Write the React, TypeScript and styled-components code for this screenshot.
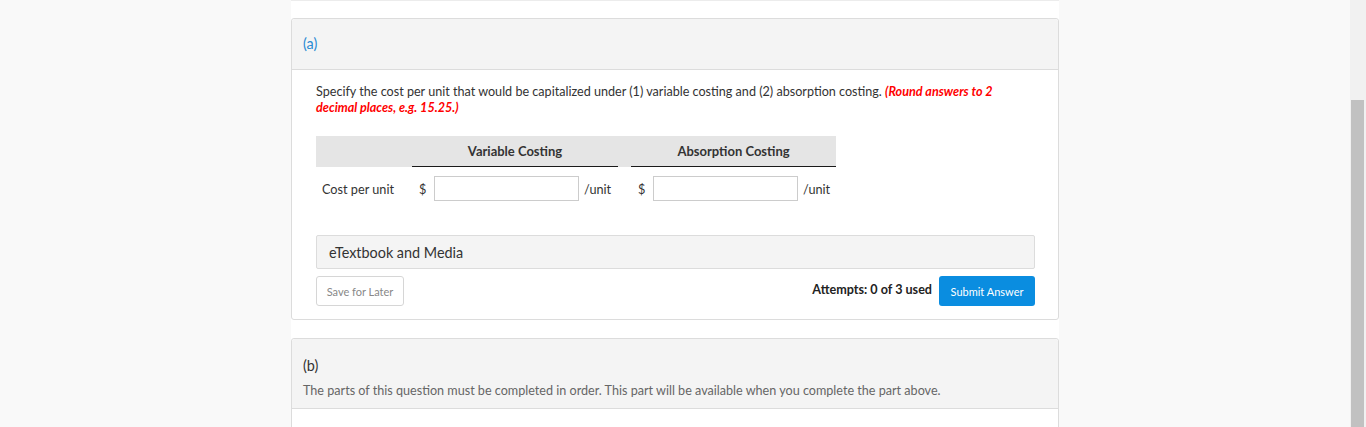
import React from "react";
import styled, { createGlobalStyle } from "styled-components";

const Global = createGlobalStyle`
  html, body { margin: 0; padding: 0; }
  body {
    background: #f9f9f9;
    font-family: Lato, "Open Sans", Arial, sans-serif;
    color: #333;
    overflow: hidden;
  }
  * { box-sizing: border-box; }
`;

const Screen = styled.div`
  display: flex;
  width: 1366px;
  height: 427px;
  overflow: hidden;
`;

const Main = styled.div`
  flex: 1;
  display: flex;
  justify-content: center;
`;

const ScrollTrack = styled.div`
  width: 16px;
  background: #f1f1f1;
  padding: 100px 2px 0 1px;
  display: flex;
`;

const ScrollThumb = styled.div`
  flex: 1;
  background: #c1c1c1;
`;

const Column = styled.div`
  width: 768px;
  background: #fff;
  border-top: 1px solid #ececec;
  padding-top: 17px;
  display: flex;
  flex-direction: column;
  gap: 18px;
`;

const Panel = styled.section`
  border: 1px solid #dcdcdc;
  border-radius: 3px;
  background: #fff;
`;

const PanelHeader = styled.div<{ $tall?: boolean }>`
  background: #f4f4f4;
  border-bottom: 1px solid #dcdcdc;
  border-radius: 3px 3px 0 0;
  padding: ${(p) => (p.$tall ? "18px 11px 10px" : "16px 11px 0")};
  height: ${(p) => (p.$tall ? "70px" : "51px")};
`;

const PartLabel = styled.div<{ $active?: boolean }>`
  font-size: 14.4px;
  line-height: 18px;
  color: ${(p) => (p.$active ? "#2b8bd3" : "#333")};
`;

const LockedNote = styled.div`
  margin-top: 8px;
  font-size: 12.6px;
  line-height: 16px;
  color: #666;
`;

const PanelBody = styled.div<{ $empty?: boolean }>`
  padding: ${(p) => (p.$empty ? "0" : "14px 23px 13px 24px")};
  height: ${(p) => (p.$empty ? "30px" : "auto")};
`;

const Prompt = styled.p`
  margin: 0;
  font-size: 12.6px;
  line-height: 16px;
  color: #333;
`;

const Hint = styled.em`
  color: #f00;
  font-weight: 700;
`;

const CostTable = styled.div`
  margin-top: 20px;
  display: grid;
  grid-template-columns: 96px 206px 13px 205px;
  width: 520px;
`;

const HeadCell = styled.div<{ $underline?: boolean }>`
  background: #e5e5e5;
  height: 31px;
  font-size: 13px;
  font-weight: 700;
  color: #333;
  display: flex;
  align-items: center;
  justify-content: center;
  padding-bottom: 1px;
  border-bottom: 1px solid ${(p) => (p.$underline ? "#1a1a1a" : "#e5e5e5")};
`;

const RowLabel = styled.div`
  font-size: 12.7px;
  color: #333;
  padding-left: 6px;
  height: 43px;
  display: flex;
  align-items: center;
`;

const InputCell = styled.div`
  display: flex;
  align-items: center;
  height: 43px;
  font-size: 12.7px;
  color: #333;
  padding-left: 7px;
`;

const Dollar = styled.span`
  width: 15px;
`;

const AnswerInput = styled.input`
  width: 145px;
  height: 25px;
  border: 1px solid #ccc;
  border-radius: 0;
  background: #fff;
  margin: 0 5px 0 0;
  padding: 0 6px;
  font: inherit;
`;

const Unit = styled.span``;

const MediaBar = styled.div`
  margin-top: 25px;
  height: 34px;
  background: #f4f4f4;
  border: 1px solid #dcdcdc;
  border-radius: 2px;
  padding: 0 12px;
  display: flex;
  align-items: center;
  font-size: 14.4px;
  color: #333;
`;

const ActionRow = styled.div`
  margin-top: 7px;
  display: flex;
  align-items: center;
`;

const SaveButton = styled.button`
  height: 30px;
  width: 88px;
  border: 1px solid #d6d6d6;
  border-radius: 3px;
  background: #fff;
  color: #888;
  font-family: inherit;
  font-size: 11px;
  padding: 0;
`;

const Attempts = styled.span`
  margin-left: auto;
  margin-right: 7px;
  font-size: 12.6px;
  font-weight: 700;
  color: #222;
  padding-bottom: 4px;
`;

const SubmitButton = styled.button`
  height: 30px;
  width: 96px;
  border: none;
  border-radius: 3px;
  background: #0a8de0;
  color: #fff;
  font-family: inherit;
  font-size: 11px;
  padding: 0;
`;

export default function App() {
  return (
    <>
      <Global />
      <Screen>
        <Main>
          <Column>
            <Panel>
              <PanelHeader>
                <PartLabel $active>(a)</PartLabel>
              </PanelHeader>
              <PanelBody>
                <Prompt>
                  Specify the cost per unit that would be capitalized under (1) variable costing and (2) absorption costing.{" "}
                  <Hint>(Round answers to 2 decimal places, e.g. 15.25.)</Hint>
                </Prompt>
                <CostTable>
                  <HeadCell />
                  <HeadCell $underline>Variable Costing</HeadCell>
                  <HeadCell />
                  <HeadCell $underline>Absorption Costing</HeadCell>
                  <RowLabel>Cost per unit</RowLabel>
                  <InputCell>
                    <Dollar>$</Dollar>
                    <AnswerInput type="text" />
                    <Unit>/unit</Unit>
                  </InputCell>
                  <div />
                  <InputCell>
                    <Dollar>$</Dollar>
                    <AnswerInput type="text" />
                    <Unit>/unit</Unit>
                  </InputCell>
                </CostTable>
                <MediaBar>eTextbook and Media</MediaBar>
                <ActionRow>
                  <SaveButton>Save for Later</SaveButton>
                  <Attempts>Attempts: 0 of 3 used</Attempts>
                  <SubmitButton>Submit Answer</SubmitButton>
                </ActionRow>
              </PanelBody>
            </Panel>
            <Panel>
              <PanelHeader $tall>
                <PartLabel>(b)</PartLabel>
                <LockedNote>
                  The parts of this question must be completed in order. This part will be available when you complete the part above.
                </LockedNote>
              </PanelHeader>
              <PanelBody $empty />
            </Panel>
          </Column>
        </Main>
        <ScrollTrack>
          <ScrollThumb />
        </ScrollTrack>
      </Screen>
    </>
  );
}
